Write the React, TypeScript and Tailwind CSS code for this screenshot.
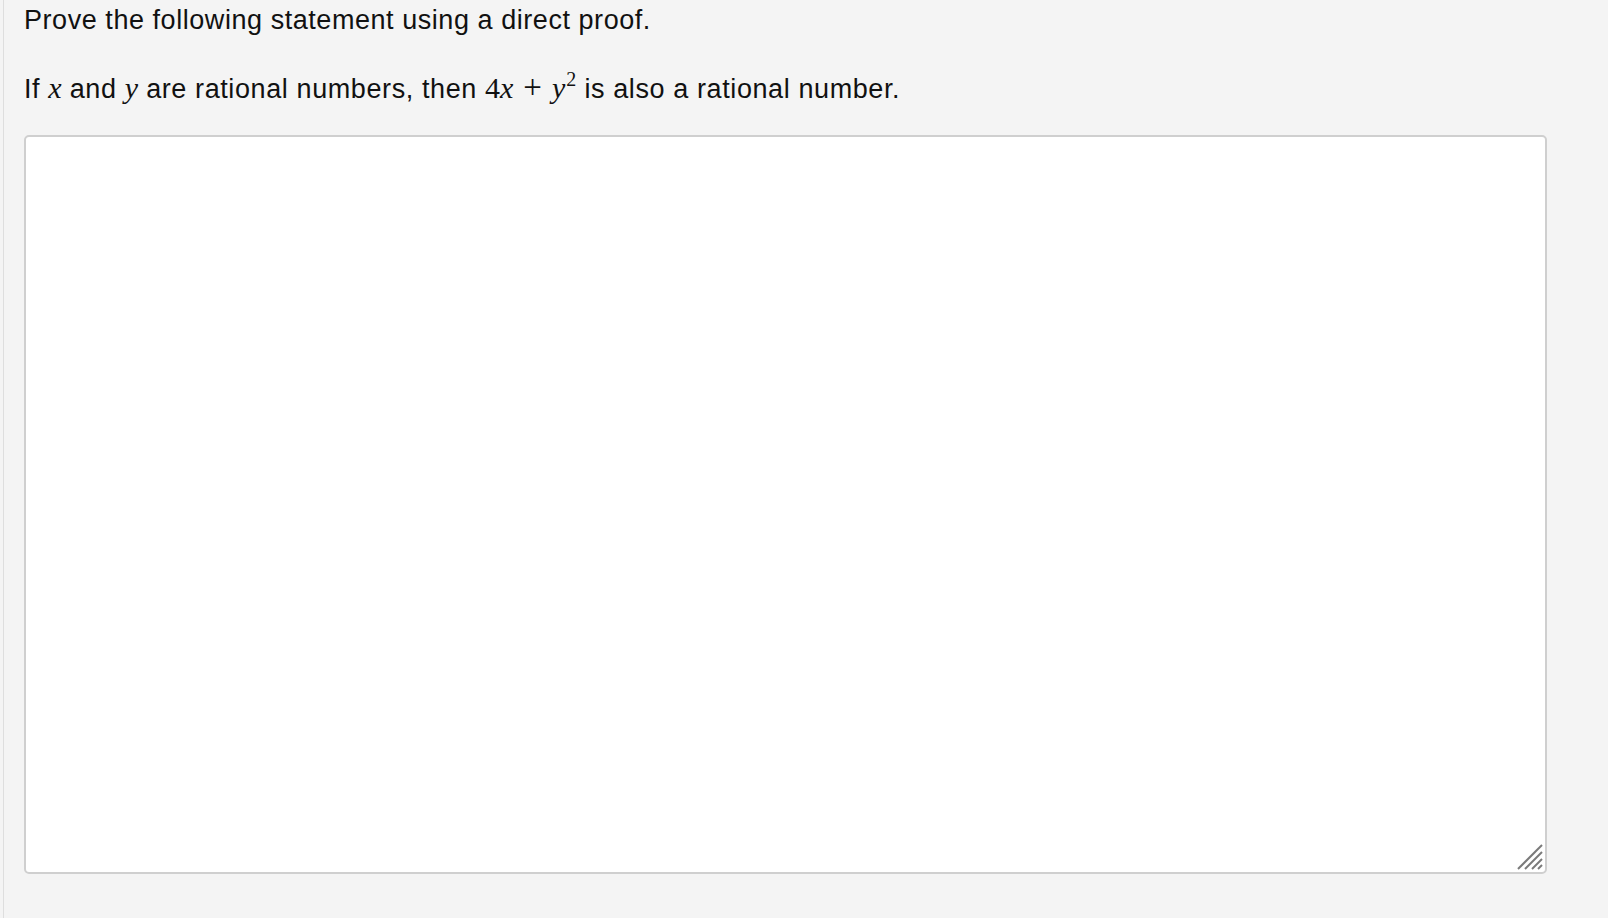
export default function App() {
  return (
    <div className="h-[918px] w-[1608px] bg-[#f4f4f4] pl-[3px]" style={{ fontFamily: '"Liberation Sans", Arial, sans-serif' }}>
      <div className="h-full border-l border-[#dedede] pl-[20px] pr-[61px]">
        <p className="pt-[5px] text-[27px] leading-[30px] tracking-[0.55px] text-[#111]">
          Prove the following statement using a direct proof.
        </p>
        <p className="mt-[38px] h-[30px] text-[27px] leading-[30px] tracking-[0.6px] text-[#111]">
          If <span className="font-['Liberation_Serif'] text-[30px] italic tracking-normal">x</span> and{" "}
          <span className="font-['Liberation_Serif'] text-[30px] italic tracking-normal">y</span> are rational numbers, then{" "}
          <span className="font-['Liberation_Serif'] text-[30px] leading-[0px] tracking-normal">
            4<span className="italic">x</span>
            <span className="mx-[10px] text-[33px]">+</span>
            <span className="italic">y</span>
            <span className="relative -top-[12px] ml-[1px] align-baseline text-[20px]">2</span>
          </span>{" "}
          is also a rational number.
        </p>
        <div className="relative mt-[32px] h-[739px]">
          <textarea className="block h-full w-full resize-none rounded-[5px] border-2 border-[#cfcfcf] bg-white outline-none" />
          <svg className="absolute bottom-[3px] right-[3px]" width="28" height="28" viewBox="0 0 28 28">
            <g stroke="#7a7a7a" strokeWidth="2">
              <line x1="2" y1="26" x2="26" y2="2" />
              <line x1="9" y1="26" x2="26" y2="9" />
              <line x1="16" y1="26" x2="26" y2="16" />
              <line x1="22" y1="26" x2="26" y2="22" />
            </g>
          </svg>
        </div>
      </div>
    </div>
  );
}
